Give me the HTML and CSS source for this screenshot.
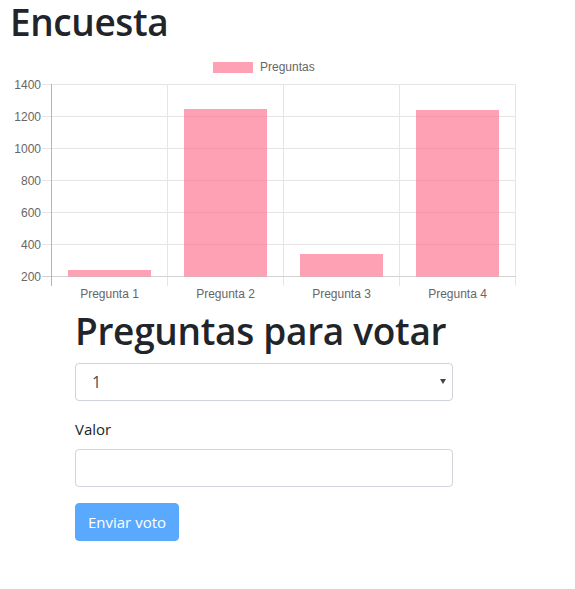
FILE: index.html
```html
<!DOCTYPE html>
<html lang="es">
<head>
<meta charset="utf-8">
<title>Encuesta</title>
<link rel="stylesheet" href="styles.css">
</head>
<body>
<h1 class="title">Encuesta</h1>
<div class="chart">
  <svg class="chart-svg" width="575" height="264" viewBox="0 3 575 264" xmlns="http://www.w3.org/2000/svg">
    <g class="grid" stroke="#e5e5e5" stroke-width="1">
      <line x1="42" y1="44.5" x2="516" y2="44.5"/>
      <line x1="42" y1="76.5" x2="516" y2="76.5"/>
      <line x1="42" y1="108.5" x2="516" y2="108.5"/>
      <line x1="42" y1="140.5" x2="516" y2="140.5"/>
      <line x1="42" y1="172.5" x2="516" y2="172.5"/>
      <line x1="42" y1="204.5" x2="516" y2="204.5"/>
      <line x1="167.5" y1="44" x2="167.5" y2="246"/>
      <line x1="283.5" y1="44" x2="283.5" y2="246"/>
      <line x1="399.5" y1="44" x2="399.5" y2="246"/>
      <line x1="515.5" y1="44" x2="515.5" y2="246"/>
    </g>
    <line x1="42" y1="236.5" x2="516" y2="236.5" stroke="#d2d2d2"/>
    <line x1="51.5" y1="44" x2="51.5" y2="246" stroke="#b4b4b4"/>
    <g fill="rgba(255,99,132,0.6)">
      <rect x="68" y="230" width="83" height="6.5"/>
      <rect x="184" y="69" width="83" height="167.5"/>
      <rect x="300" y="214" width="83" height="22.5"/>
      <rect x="416" y="70" width="83" height="166.5"/>
    </g>
    <rect x="213" y="22" width="40" height="11" fill="rgba(255,99,132,0.6)"/>
    <g class="labels" font-family="'Liberation Sans', Arial, sans-serif" font-size="12" fill="#666">
      <text x="260" y="31">Preguntas</text>
      <g text-anchor="end">
        <text x="41" y="48.5">1400</text>
        <text x="41" y="80.5">1200</text>
        <text x="41" y="112.5">1000</text>
        <text x="41" y="144.5">800</text>
        <text x="41" y="176.5">600</text>
        <text x="41" y="208.5">400</text>
        <text x="41" y="240.5">200</text>
      </g>
      <g text-anchor="middle">
        <text x="109.5" y="257.5">Pregunta 1</text>
        <text x="225.5" y="257.5">Pregunta 2</text>
        <text x="341.5" y="257.5">Pregunta 3</text>
        <text x="457.5" y="257.5">Pregunta 4</text>
      </g>
    </g>
  </svg>
</div>
<section class="vote">
  <h1 class="vote-title">Preguntas para votar</h1>
  <form class="vote-form">
    <div class="form-group">
      <div class="select-wrap">
        <select class="form-control">
          <option>1</option>
          <option>2</option>
          <option>3</option>
          <option>4</option>
        </select>
      </div>
    </div>
    <div class="form-group">
      <label class="form-label" for="valor">Valor</label>
      <input class="form-control" id="valor" type="text">
    </div>
    <button class="btn" type="button">Enviar voto</button>
  </form>
</section>
</body>
</html>
```
FILE: styles.css
```css
html, body {
  margin: 0;
  padding: 0;
  background: #fff;
}
body {
  font-family: "Open Sans", "Noto Sans", sans-serif;
  font-size: 16px;
  color: #212529;
}
.title {
  margin: 0;
  padding-left: 10px;
  font-size: 37px;
  font-weight: 600;
  letter-spacing: -0.4px;
  line-height: 43px;
}
.chart {
  height: 264px;
}
.chart-svg {
  display: block;
}
.vote {
  padding-left: 75px;
  width: 378px;
}
.vote-title {
  margin: 0 0 8px;
  font-size: 37px;
  font-weight: 600;
  letter-spacing: -0.3px;
  line-height: 48px;
  white-space: nowrap;
}
.vote-form {
  margin: 0;
}
.form-group {
  margin-bottom: 16px;
}
.form-label {
  display: block;
  margin-bottom: 8px;
  font-size: 15px;
  line-height: 24px;
}
.form-control {
  display: block;
  box-sizing: border-box;
  width: 378px;
  height: 38px;
  margin: 0;
  padding: 6px 12px;
  font-family: inherit;
  font-size: 16px;
  color: #495057;
  background: #fff;
  border: 1px solid #ced4da;
  border-radius: 4px;
  outline: none;
}
.select-wrap {
  position: relative;
}
.select-wrap select {
  -webkit-appearance: none;
  appearance: none;
  padding-left: 16px;
}
.select-wrap::after {
  content: "";
  position: absolute;
  right: 7px;
  top: 16px;
  width: 0;
  height: 0;
  border-left: 3px solid transparent;
  border-right: 3px solid transparent;
  border-top: 5px solid #444;
  pointer-events: none;
}
.btn {
  display: block;
  box-sizing: border-box;
  width: 104px;
  height: 38px;
  padding: 6px 0;
  font-family: inherit;
  font-size: 15px;
  line-height: 24px;
  text-align: center;
  color: #fff;
  background: #59aaff;
  border: 1px solid #59aaff;
  border-radius: 4px;
}
```
